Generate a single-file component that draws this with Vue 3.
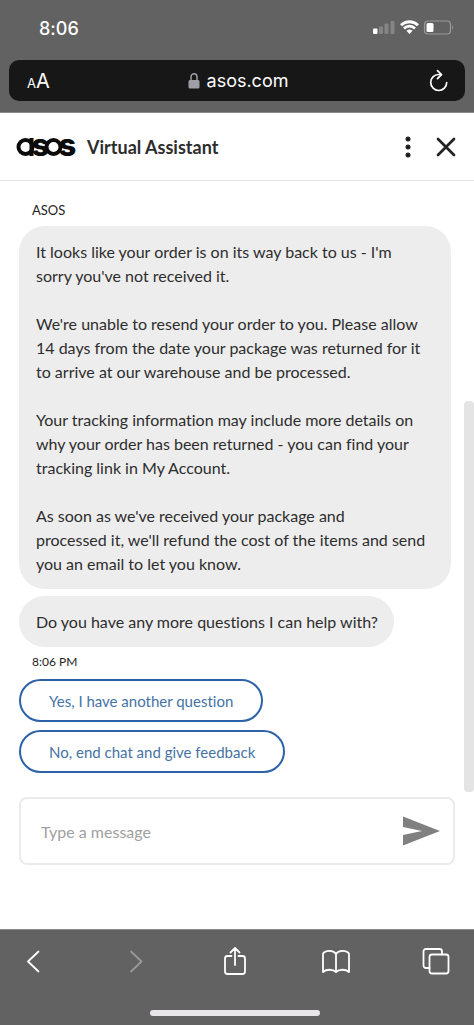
<script setup>
import { ref } from 'vue'

const draft = ref('')

const paragraphs = [
  "It looks like your order is on its way back to us - I'm\nsorry you've not received it.",
  "We're unable to resend your order to you. Please allow\n14 days from the date your package was returned for it\nto arrive at our warehouse and be processed.",
  'Your tracking information may include more details on\nwhy your order has been returned - you can find your\ntracking link in My Account.',
  "As soon as we've received your package and\nprocessed it, we'll refund the cost of the items and send\nyou an email to let you know."
]

const replies = ['Yes, I have another question', 'No, end chat and give feedback']
</script>

<template>
  <div class="screen">
    <div class="browser-top">
      <div class="status">
        <span class="clock">8:06</span>
        <svg class="status-icons" width="82" height="16" viewBox="0 0 82 16" aria-hidden="true">
          <rect x="0" y="8.500" width="4.500" height="5.500" rx="1" fill="#fff" />
          <rect x="6" y="6.500" width="4" height="7.500" rx="1" fill="#858585" />
          <rect x="11.500" y="3.500" width="4" height="10.500" rx="1" fill="#858585" />
          <rect x="17.500" y="1" width="4" height="13" rx="1" fill="#858585" />
          <g fill="none" stroke="#fff" stroke-width="2.800">
            <path d="M28 5.200a12.200 12.200 0 0 1 17 0" />
            <path d="M31 8.400a8 8 0 0 1 11 0" />
          </g>
          <path d="M33.500 10.800a4.600 4.600 0 0 1 6 0l-3 3.200z" fill="#fff" />
          <rect x="51.500" y="1" width="26" height="13" rx="3.500" fill="none" stroke="#9a9a9a" stroke-width="1.200" />
          <rect x="53.500" y="3" width="7" height="9" rx="1.500" fill="#fff" />
          <path d="M79.300 5.500q2 2 0 4.200z" fill="#9a9a9a" />
        </svg>
      </div>
      <div class="address">
        <button class="bare reader" aria-label="Page settings"><span class="small-a">A</span><span class="large-a">A</span></button>
        <div class="domain">
          <svg width="12" height="16" viewBox="0 0 12 16" aria-hidden="true">
            <path d="M3 7.500V4.200a3 3.400 0 0 1 6 0v3.300" fill="none" stroke="#a09fa8" stroke-width="1.500" />
            <rect x="0.500" y="7" width="11" height="8.500" rx="1.500" fill="#a09fa8" />
          </svg>
          <span>asos.com</span>
        </div>
        <button class="bare" aria-label="Reload">
          <svg width="20" height="24" viewBox="0 0 20 24" fill="none" stroke="#fff" stroke-width="1.700" stroke-linecap="round" stroke-linejoin="round">
            <path d="M11.500 5.500H9.500a8 8 0 1 0 8.200 8" />
            <path d="M8.500 1.700l4 3.900-4 4" />
          </svg>
        </button>
      </div>
    </div>

    <header class="chat-header">
      <svg class="logo" width="62" height="44" viewBox="0 0 62 44" role="img" aria-label="ASOS">
        <g fill="none" stroke="#0b0b0b" stroke-width="4">
          <circle cx="9.500" cy="22" r="7" />
          <circle cx="37.500" cy="22" r="7" />
        </g>
        <rect x="13.500" y="13" width="4" height="18" fill="#0b0b0b" />
        <text class="logo-letter" x="15.500" y="31">s</text>
        <text class="logo-letter" x="42.500" y="31">s</text>
      </svg>
      <h1>Virtual Assistant</h1>
      <button class="bare" aria-label="More options">
        <svg width="10" height="24" viewBox="0 0 10 24" fill="#222">
          <circle cx="5" cy="4" r="2.500" />
          <circle cx="5" cy="12" r="2.500" />
          <circle cx="5" cy="20" r="2.500" />
        </svg>
      </button>
      <button class="bare" aria-label="Close">
        <svg width="20" height="20" viewBox="0 0 20 20" fill="none" stroke="#222" stroke-width="2.700" stroke-linecap="round">
          <path d="M2 2l16 16M18 2L2 18" />
        </svg>
      </button>
    </header>

    <main class="conversation">
      <section class="messages">
        <p class="sender">ASOS</p>
        <div class="bubble">
          <p v-for="text in paragraphs" :key="text">{{ text }}</p>
        </div>
        <div class="bubble short"><p>Do you have any more questions I can help with?</p></div>
        <p class="time">8:06 PM</p>
        <div class="replies">
          <button v-for="reply in replies" :key="reply" class="reply">{{ reply }}</button>
        </div>
      </section>
      <div class="scroll-thumb"></div>
    </main>

    <form class="composer" @submit.prevent>
      <input v-model="draft" type="text" placeholder="Type a message" aria-label="Type a message" />
      <button class="bare" aria-label="Send">
        <svg width="38" height="30" viewBox="0 0 38 30"><path d="M0 0.500L37 15 0 29.500V19l19-4L0 11z" fill="#808080" /></svg>
      </button>
    </form>

    <footer class="browser-bottom">
      <nav class="tools" aria-label="Browser">
        <button class="bare" aria-label="Back">
          <svg width="28" height="30" viewBox="0 0 28 30"><path d="M18.500 5.500L8 15.500l10.500 10" /></svg>
        </button>
        <button class="bare dim" aria-label="Forward">
          <svg width="28" height="30" viewBox="0 0 28 30"><path d="M10 5.500l10.500 10L10 25.500" /></svg>
        </button>
        <button class="bare" aria-label="Share">
          <svg width="28" height="30" viewBox="0 0 28 30"><path d="M10.500 10H6.500a2.500 2.500 0 0 0-2.500 2.500v13A2.500 2.500 0 0 0 6.500 28h15a2.500 2.500 0 0 0 2.500-2.500v-13a2.500 2.500 0 0 0-2.500-2.500h-4M14 19V2.500M9.500 6.500L14 2l4.500 4.500" /></svg>
        </button>
        <button class="bare" aria-label="Bookmarks">
          <svg width="28" height="30" viewBox="0 0 28 30"><path d="M14 8C11.500 4 4 4 1 7.500v18.500c3.500-3 10-3 13 0 3-3 9.500-3 13 0V7.500C24 4 16.500 4 14 8zM14 8v18" /></svg>
        </button>
        <button class="bare" aria-label="Tabs">
          <svg width="28" height="30" viewBox="0 0 28 30"><path d="M7.500 22H4a2.500 2.500 0 0 1-2.500-2.500v-14A2.500 2.500 0 0 1 4 3h13.500A2.500 2.500 0 0 1 20 5.500V8.500" /><rect x="7.500" y="8.500" width="19" height="19" rx="2.500" /></svg>
        </button>
      </nav>
      <div class="home-bar"></div>
    </footer>
  </div>
</template>

<style>
body {
  background: #fff;
}
</style>

<style scoped>
.screen {
  min-height: 100vh;
  display: flex;
  flex-direction: column;
  background: #fff;
  color: #2d2d2d;
  font-family: Futura, "Futura PT", Lato, sans-serif;
  font-variant-ligatures: none;
}
p,
h1 {
  margin: 0;
}
svg {
  display: block;
}
.bare {
  padding: 0;
  border: 0;
  background: none;
  color: inherit;
  font: inherit;
}
.browser-top {
  box-sizing: border-box;
  height: 113px;
  padding: 0 9px;
  background: #626262;
  border-bottom: 1px solid #8a8a8a;
  color: #fff;
  font-family: Inter, sans-serif;
}
.status {
  height: 60px;
  box-sizing: border-box;
  padding: 0 10px 4px 30px;
  display: flex;
  align-items: center;
  justify-content: space-between;
}
.clock {
  font-size: 18px;
  font-weight: 500;
}
.address {
  height: 41px;
  padding: 0 16px 0 18px;
  display: grid;
  grid-template-columns: 1fr auto 1fr;
  align-items: center;
  border-radius: 10px;
  background: #171717;
}
.address .bare:first-child {
  justify-self: start;
}
.address .bare:last-child {
  justify-self: end;
}
.small-a {
  font-size: 13px;
}
.large-a {
  font-size: 20px;
}
.domain {
  display: flex;
  align-items: center;
  gap: 7px;
  font-size: 18px;
}
.chat-header {
  height: 67px;
  padding: 0 18px 0 16px;
  display: flex;
  align-items: center;
  border-bottom: 1px solid #e4e4e4;
}
.logo-letter {
  font-family: Inter, sans-serif;
  font-size: 31px;
  font-weight: 800;
  fill: #0b0b0b;
}
h1 {
  flex: 1;
  margin-left: 9px;
  font-size: 18px;
  font-weight: 700;
}
.chat-header .bare + .bare {
  margin-left: 23px;
}
.conversation {
  display: flex;
  align-items: flex-end;
}
.messages {
  flex: 1;
  padding: 19px 13px 19px 19px;
}
.sender,
.time {
  padding-left: 13px;
  font-size: 13px;
  line-height: 20px;
  color: #222;
}
.bubble {
  margin-top: 6px;
  padding: 14px 16px 13px 17px;
  border-radius: 26px;
  background: #ededed;
  font-size: 16px;
  line-height: 24px;
  white-space: pre-line;
}
.bubble p + p {
  margin-top: 24px;
}
.bubble.short {
  width: fit-content;
  margin-top: 7px;
}
.time {
  margin: 5px 0 7px;
  font-size: 12px;
}
.replies {
  display: flex;
  flex-direction: column;
  align-items: flex-start;
  gap: 8px;
}
.reply {
  height: 43px;
  padding: 0 28px;
  border: 2px solid #2d62a8;
  border-radius: 22px;
  background: #fff;
  color: #4673a5;
  font-family: inherit;
  font-size: 15px;
  font-variant-ligatures: none;
}
.scroll-thumb {
  width: 10px;
  height: 391px;
  border-radius: 4px;
  background: #e4e4e4;
}
.composer {
  box-sizing: border-box;
  height: 68px;
  margin: 5px 19px 0;
  padding: 0 12px 0 20px;
  display: flex;
  align-items: center;
  border: 2px solid #ebebeb;
  border-radius: 8px;
}
.composer input {
  flex: 1;
  min-width: 0;
  padding: 0;
  border: 0;
  outline: 0;
  background: none;
  color: #2d2d2d;
  font-family: inherit;
  font-size: 16px;
}
.composer input::placeholder {
  color: #a0a0a0;
}
.browser-bottom {
  box-sizing: border-box;
  height: 96px;
  margin-top: auto;
  padding: 16px 24px 9px 20px;
  display: flex;
  flex-direction: column;
  justify-content: space-between;
  align-items: center;
  border-top: 1px solid #8a8a8a;
  background: #626262;
}
.tools {
  width: 100%;
  display: flex;
  justify-content: space-between;
}
.tools svg {
  fill: none;
  stroke: #fff;
  stroke-width: 1.8px;
  stroke-linecap: round;
  stroke-linejoin: round;
}
.dim svg {
  stroke: #999;
}
.home-bar {
  width: 170px;
  height: 6px;
  border-radius: 3px;
  background: #e8e6e8;
}
</style>
